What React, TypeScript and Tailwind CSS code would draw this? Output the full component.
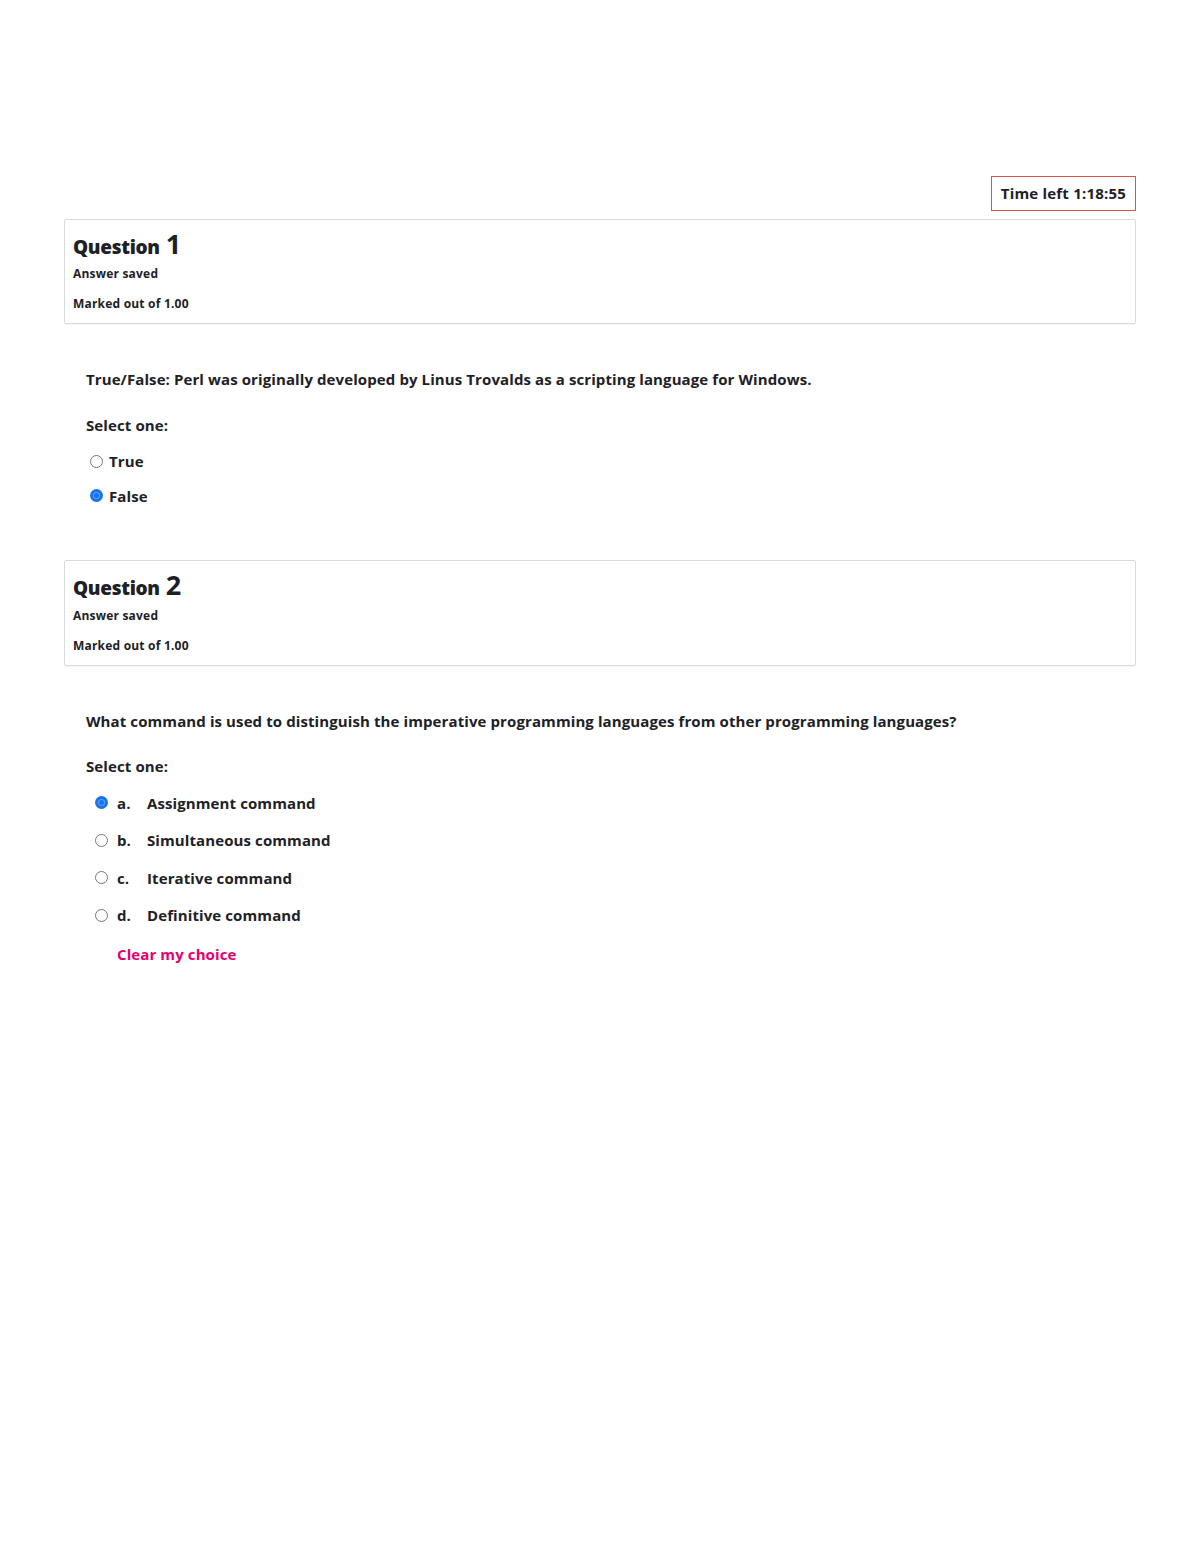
import { ReactNode } from 'react';

type Option = { label?: string; text: string; checked?: boolean };

function Radio({ checked }: { checked?: boolean }) {
  if (checked) {
    return (
      <span className="inline-flex h-[13px] w-[13px] shrink-0 items-center justify-center rounded-full bg-[#1a73e8]">
        <span className="h-[5px] w-[5px] rounded-full bg-[#1a73e8] ring-1 ring-[#5aa0ff]" />
      </span>
    );
  }
  return (
    <span className="inline-block h-[13px] w-[13px] shrink-0 rounded-full border border-[#767676] bg-white" />
  );
}

function QuestionHeader({ num }: { num: number }) {
  return (
    <div className="rounded-[2px] border border-[#d7dbe0] bg-white px-[8px] pb-[10px] pt-[10px] shadow-[0_1px_1px_rgba(0,0,0,0.04)]">
      <div className="flex items-baseline gap-[6px] text-[#1d2125]">
        <span className="text-[19px] font-extrabold tracking-[-0.3px]">Question</span>
        <span className="text-[27px] font-bold leading-none">{num}</span>
      </div>
      <div className="mt-[4px] text-[12px] font-bold tracking-[0.2px] text-[#1d2125]">Answer saved</div>
      <div className="mt-[12px] text-[12px] font-bold tracking-[0.2px] text-[#1d2125]">Marked out of 1.00</div>
    </div>
  );
}

function QuestionBody({ text, children }: { text: string; children: ReactNode }) {
  return (
    <div className="px-[22px] pt-[44px]">
      <div className="text-[15px] font-bold tracking-[0.1px] text-[#1d2125]">{text}</div>
      <div className="mt-[23px] text-[15px] font-bold tracking-[0.1px] text-[#1d2125]">Select one:</div>
      {children}
    </div>
  );
}

export default function App() {
  const q2: Option[] = [
    { label: 'a.', text: 'Assignment command', checked: true },
    { label: 'b.', text: 'Simultaneous command' },
    { label: 'c.', text: 'Iterative command' },
    { label: 'd.', text: 'Definitive command' },
  ];

  return (
    <div className="min-h-[1553px] w-[1200px] bg-white font-['Open_Sans',sans-serif] text-[#1d2125]">
      <div className="px-[64px] pt-[176px]">
        <div className="flex justify-end">
          <div className="border border-[#d9534f] px-[9px] py-[5px] text-[15px] font-bold tracking-[0.2px] text-[#1d2125]">
            Time left 1:18:55
          </div>
        </div>

        <div className="mt-[8px]">
          <QuestionHeader num={1} />
          <QuestionBody text="True/False: Perl was originally developed by Linus Trovalds as a scripting language for Windows.">
            <div className="mt-[14px] flex flex-col gap-[12px] pl-[4px]">
              <label className="flex items-center gap-[6px] text-[15px] font-bold tracking-[0.1px]">
                <Radio />
                True
              </label>
              <label className="flex items-center gap-[6px] text-[15px] font-bold tracking-[0.1px]">
                <Radio checked />
                False
              </label>
            </div>
          </QuestionBody>
        </div>

        <div className="mt-[53px]">
          <QuestionHeader num={2} />
          <QuestionBody text="What command is used to distinguish the imperative programming languages from other programming languages?">
            <div className="mt-[14px] flex flex-col gap-[15px] pl-[9px]">
              {q2.map((o) => (
                <label key={o.label} className="flex items-center text-[15px] font-bold tracking-[0.1px]">
                  <Radio checked={o.checked} />
                  <span className="ml-[9px] w-[30px]">{o.label}</span>
                  <span>{o.text}</span>
                </label>
              ))}
            </div>
            <div className="mt-[16px] pl-[31px] text-[15px] font-bold tracking-[0.1px] text-[#e6006e]">
              Clear my choice
            </div>
          </QuestionBody>
        </div>
      </div>
    </div>
  );
}
